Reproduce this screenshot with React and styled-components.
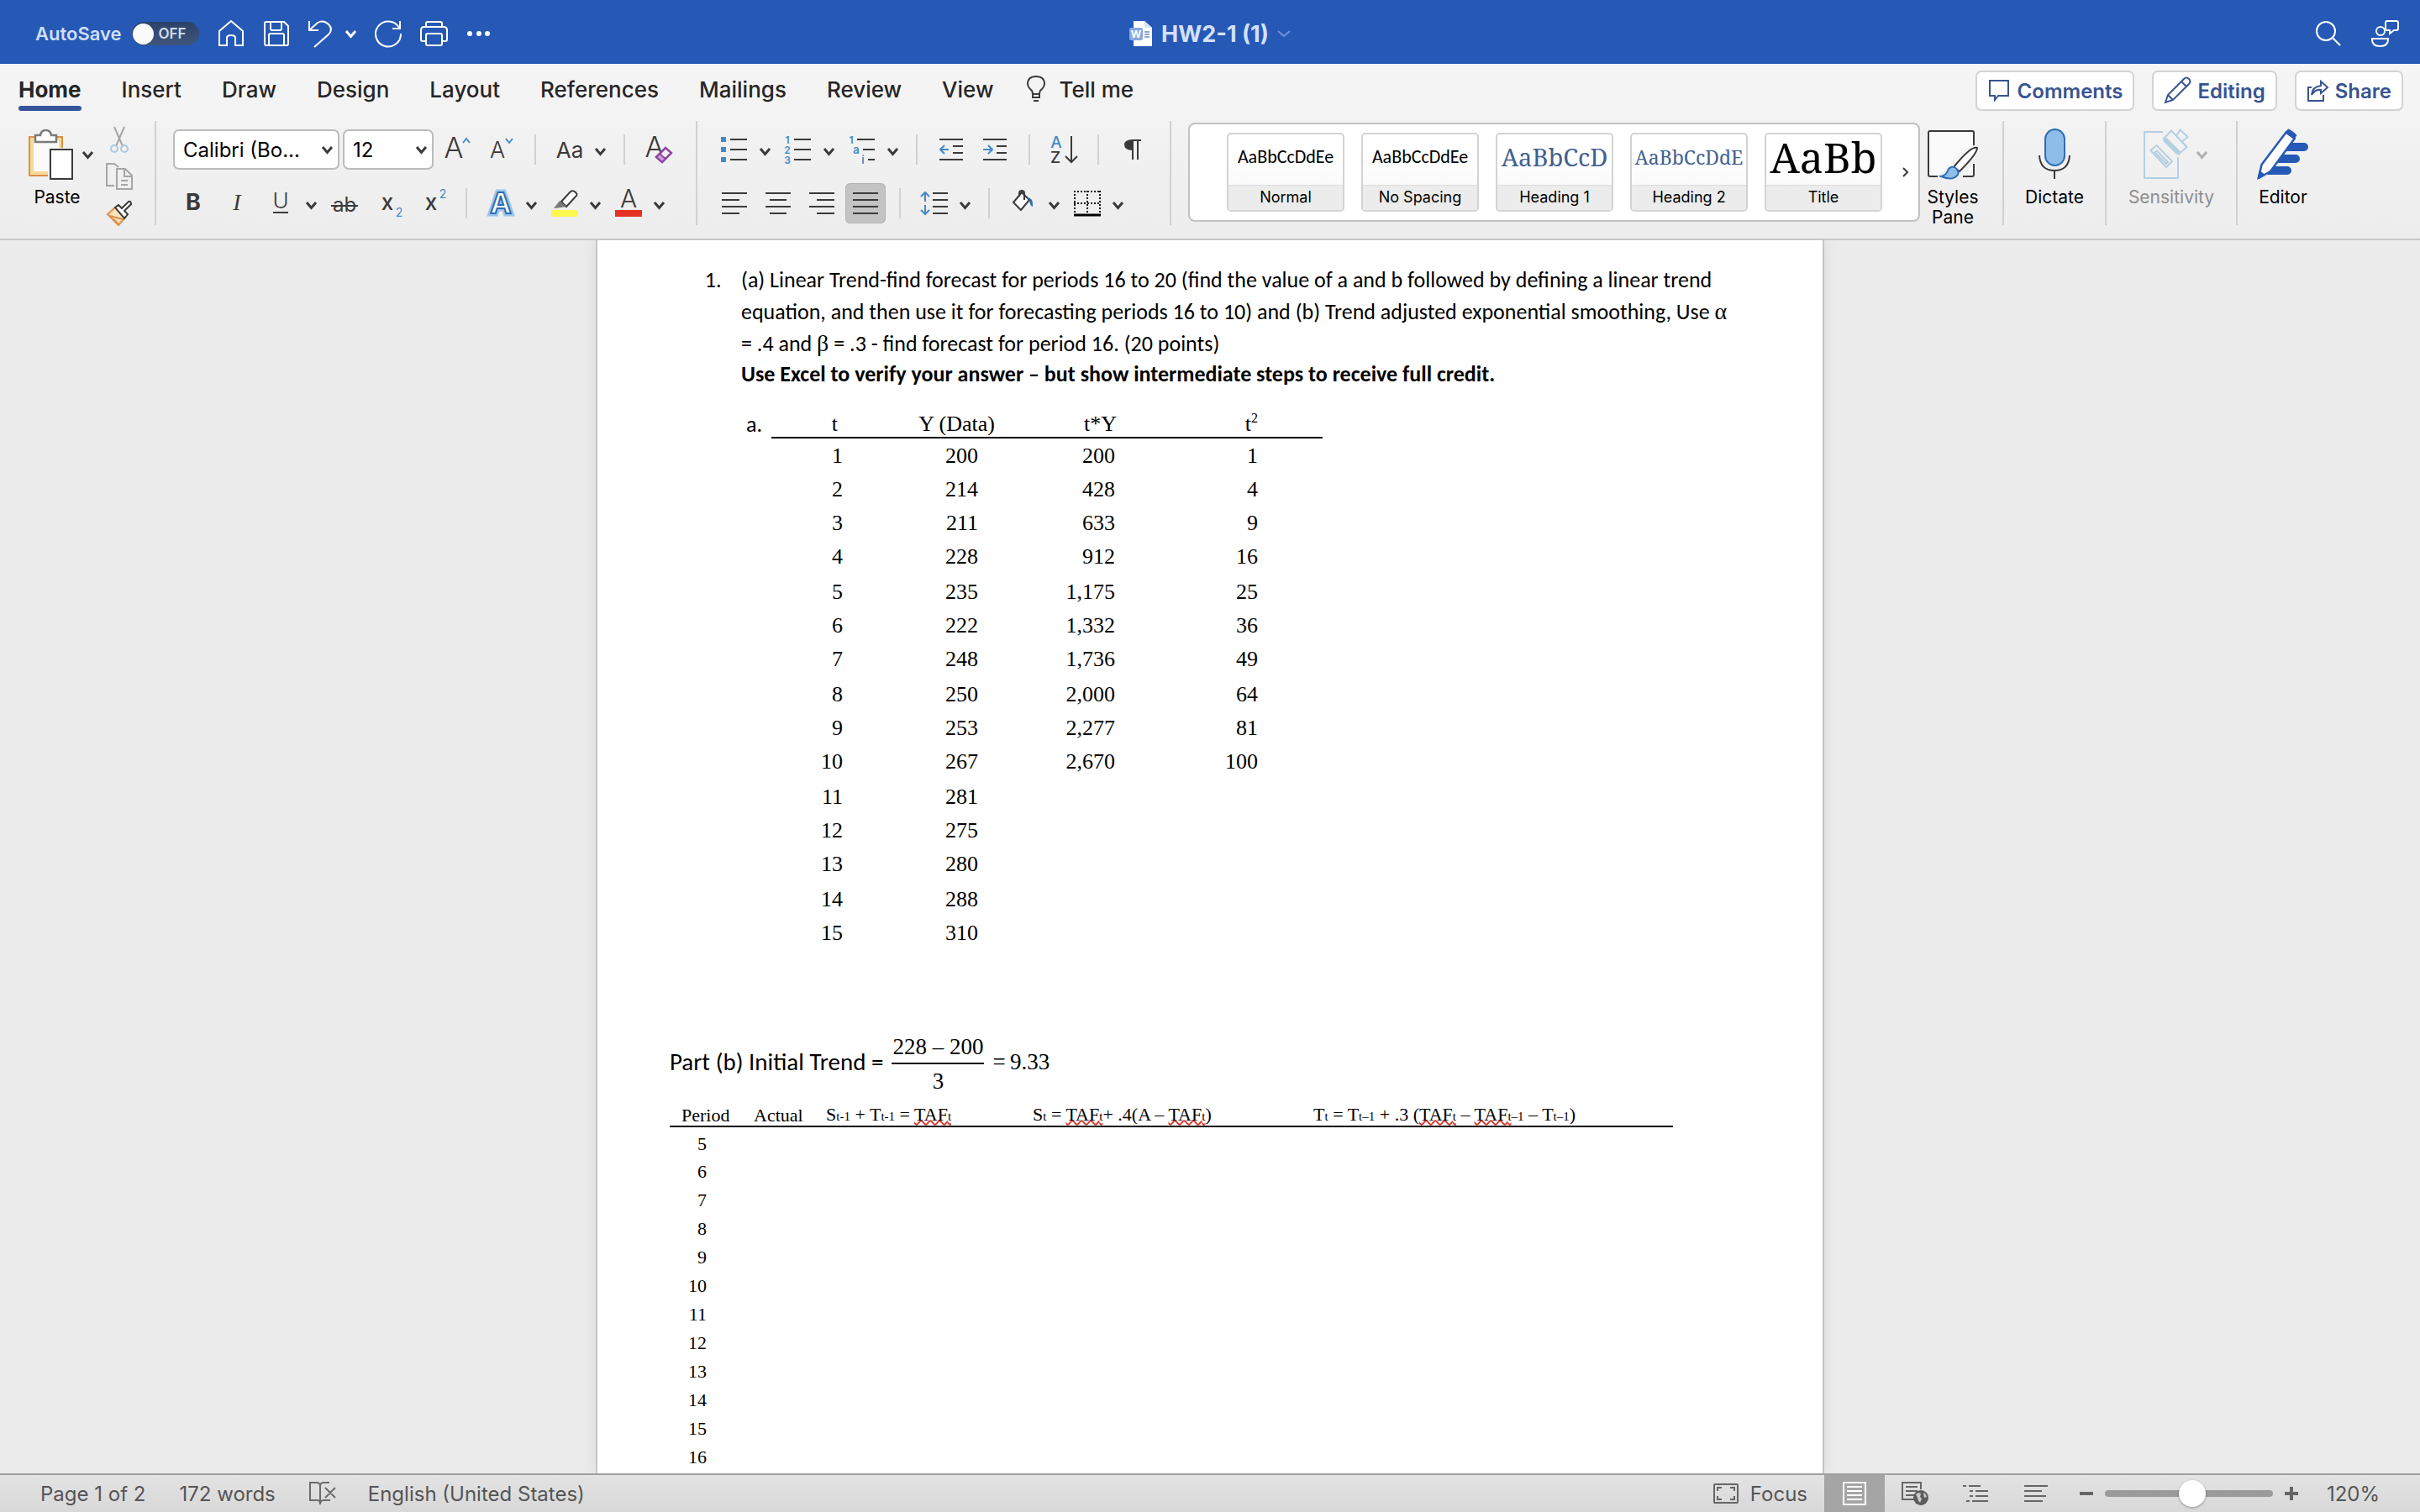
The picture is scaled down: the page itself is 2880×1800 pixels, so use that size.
import React,{ useState } from 'react';
import styled, { createGlobalStyle, css } from 'styled-components';

const ink = '#3b3a39';
const blue = '#4489c8';
const brand = '#2659b6';
const uiFont = 'Inter, "Liberation Sans", sans-serif';
const bodyFont = 'Carlito, Calibri, Lato, sans-serif';
const serifFont = '"Times New Roman", "Liberation Serif", serif';

const GlobalStyle = createGlobalStyle`
    * {
        box-sizing:border-box;
    }
    body {
        margin:0;
        font-family:${uiFont};
        color:#262626;
    }
    button, select, input {
        font:inherit;
        color:inherit;
        margin:0;
    }
    button {
        border:0;
        padding:0;
        background:none;
        cursor:pointer;
    }
    svg {
        display:block;
        overflow:visible;
        flex:none;
    }
`
const Window = styled.div`
    display:flex;
    flex-direction:column;
    height:100vh;
    overflow:hidden;
`

/* title bar */
const TitleBar = styled.header`
    display:grid;
    grid-template-columns:1fr auto 1fr;
    align-items:center;
    height:76px;
    padding:4px 24px 0;
    background:${brand};
    color:#fff;
`
const QuickBar = styled.div`
    display:flex;
    align-items:center;
    gap:22px;
    padding-left:18px;
`
const QuickButton = styled.button`
    display:flex;
    align-items:center;
`
const UndoGroup = styled.div`
    display:flex;
    align-items:center;
    gap:16px;
`
const AutoSave = styled.label`
    display:flex;
    align-items:center;
    gap:12px;
    font-size:22px;
    font-weight:600;
    color:#cfdffb;
    input {
        position:absolute;
        opacity:0;
    }
`
const Track = styled.span`
    display:flex;
    align-items:center;
    gap:6px;
    width:80px;
    height:28px;
    padding-left:1px;
    border-radius:14px;
    background:linear-gradient(#2c4269, #3f557c);
    font-size:17px;
    font-weight:600;
    color:#d3dcec;
    &::before {
        content:'';
        width:25px;
        height:25px;
        border-radius:50%;
        background:#fafafa;
    }
`
const DocTitle = styled.h1`
    display:flex;
    align-items:center;
    gap:10px;
    margin:0;
    font-size:27px;
    font-weight:700;
    color:#d3e1fb;
`
const TitleRight = styled.div`
    display:flex;
    justify-content:flex-end;
    gap:36px;
`

/* ribbon */
const Ribbon = styled.section`
    background:linear-gradient(#f6f5f6, #ededed);
    border-bottom:2px solid #c8c8c8;
`
const TabRow = styled.nav`
    display:flex;
    align-items:flex-start;
    gap:48px;
    height:68px;
    padding:8px 20px 0 22px;
`
const Tab = styled.button`
    display:flex;
    align-items:center;
    gap:16px;
    height:48px;
    padding-bottom:4px;
    font-size:26px;
    font-weight:500;
    ${p => p.$active && css`
        position:relative;
        font-weight:700;
        &::after {
            content:'';
            position:absolute;
            left:0;
            right:0;
            bottom:0;
            height:6px;
            border-radius:3px;
            background:#35549a;
        }
    `}
`
const TabList = styled.div`
    display:flex;
    gap:48px;
    margin-right:-8px;
`
const TabActions = styled.div`
    display:flex;
    gap:21px;
    margin-left:auto;
`
const ActionButton = styled.button`
    display:flex;
    align-items:center;
    gap:8px;
    height:48px;
    padding:0 12px;
    border:2px solid #d4d3d4;
    border-radius:7px;
    background:#fff;
    font-size:24px;
    font-weight:600;
    color:#375491;
`
const RibbonBody = styled.div`
    display:flex;
    align-items:flex-start;
    height:140px;
    padding-right:129px;
`
const GroupLine = styled.hr`
    width:2px;
    height:124px;
    margin:0 20px 0 ${p => p.$wide ? '20px' : '18px'};
    border:0;
    background:#d1d1d1;
    flex:none;
`
const Group = styled.div`
    display:flex;
    flex-direction:column;
    gap:16px;
    padding-top:10px;
`
const ToolRow = styled.div`
    display:flex;
    align-items:center;
    gap:4px;
    height:48px;
`
const ToolLine = styled.hr`
    width:2px;
    height:36px;
    margin:0 12px;
    border:0;
    background:#d1d1d1;
`
const ToolButton = styled.button`
    display:flex;
    align-items:center;
    justify-content:center;
    width:48px;
    height:48px;
    border-radius:6px;
    background:${p => p.$pressed ? '#c3c3c3' : 'none'};
    box-shadow:${p => p.$pressed ? 'inset 0 0 0 1px #b3b3b3' : 'none'};
`
const Split = styled.div`
    display:flex;
`
const DropButton = styled.button`
    display:flex;
    align-items:center;
    justify-content:center;
    width:24px;
    padding-top:4px;
`
const Combo = styled.span`
    display:grid;
    align-items:center;
    width:${p => p.$width};
    height:48px;
    > * {
        grid-area:1 / 1;
    }
    svg {
        justify-self:end;
        margin-right:8px;
        pointer-events:none;
    }
    select {
        appearance:none;
        width:100%;
        height:48px;
        padding:0 10px;
        border:2px solid #bcbcbc;
        border-radius:7px;
        background:#fff;
        font-size:24px;
        color:#000;
    }
`
const Clipboard = styled.div`
    display:flex;
    gap:14px;
    width:166px;
    padding-left:28px;
`
const ClipColumn = styled.div`
    display:flex;
    flex-direction:column;
`
const ClipButton = styled.button`
    display:flex;
    align-items:center;
    justify-content:center;
    width:40px;
    height:44px;
`
const BigButton = styled.button`
    display:flex;
    flex-direction:column;
    align-items:center;
    gap:7px;
    width:${p => p.$width};
    padding-top:8px;
    font-size:21px;
    line-height:24px;
    white-space:nowrap;
    color:${p => p.$muted ? '#8d8d8d' : '#000'};
    flex:none;
`
const BigIcon = styled.span`
    display:flex;
    align-items:center;
    gap:10px;
    height:64px;
    margin-left:${p => p.$split ? '8px' : '0'};
`
const Gallery = styled.div`
    display:flex;
    align-items:center;
    flex:1;
    height:118px;
    margin-top:2px;
    padding-left:44px;
    border:2px solid #c2c2c2;
    border-radius:8px;
    background:#fff;
`
const Cards = styled.div`
    display:flex;
    gap:20px;
`
const Card = styled.button`
    display:flex;
    flex-direction:column;
    width:140px;
    height:94px;
    border:2px solid #d3d3d3;
    border-radius:5px;
    background:linear-gradient(#fff 30%, #f6f6f6);
`
const Sample = styled.span`
    display:flex;
    align-items:center;
    justify-content:center;
    width:100%;
    height:60px;
    padding-bottom:6px;
    font-family:${p => p.$serif ? '"Noto Serif", "DejaVu Serif", "Liberation Serif", serif' : bodyFont};
    font-size:${p => p.$size};
    line-height:54px;
    color:${p => p.$color || '#000'};
    white-space:nowrap;
`
const CardLabel = styled.span`
    flex:1;
    width:100%;
    border-top:1px solid #dcdcdc;
    border-radius:0 0 3px 3px;
    background:#ececec;
    font-size:18px;
    line-height:28px;
    color:#000;
`
const GalleryMore = styled.button`
    display:flex;
    flex:1;
    justify-content:center;
    padding:0 0 0 12px;
`

/* document */
const Desk = styled.main`
    display:flex;
    justify-content:center;
    flex:1;
    min-height:0;
    overflow:hidden;
    background:#ebebeb;
`
const Page = styled.article`
    width:1462px;
    padding:28px 86px 0;
    border:solid #c6c6c6;
    border-width:0 2px;
    background:#fff;
    box-shadow:0 0 16px #00000014;
    font-family:${bodyFont};
    font-size:26px;
    color:#000;
`
const Question = styled.ol`
    margin:0;
    padding:0 0 0 85px;
    line-height:38px;
    white-space:nowrap;
    li {
        padding-left:0;
        &::marker {
            content:'1.    ';
        }
    }
    strong {
        display:block;
        line-height:34px;
    }
`
const Greek = styled.span`
    font-family:${serifFont};
    font-size:28px;
    line-height:30px;
`
const PartA = styled.section`
    display:flex;
    align-items:flex-start;
    gap:11px;
    margin-top:28px;
    padding-left:91px;
    line-height:30px;
`
const DataTable = styled.table`
    width:656px;
    table-layout:fixed;
    border-collapse:collapse;
    font-family:${serifFont};
    font-size:26px;
    th {
        padding:0;
        font-weight:400;
        line-height:30px;
        text-align:right;
        border-bottom:2px solid #000;
    }
    th:nth-child(1) {
        padding-right:6px;
    }
    td {
        height:40px;
        padding:0;
        line-height:36px;
        text-align:right;
        vertical-align:bottom;
    }
    td:nth-child(2) {
        padding-right:20px;
    }
    td:nth-child(3) {
        padding-right:2px;
    }
    tr:nth-child(3n+5) td {
        height:42px;
    }
    sup {
        font-size:16px;
        line-height:0;
    }
`
const Formula = styled.div`
    display:flex;
    align-items:center;
    gap:10px;
    margin-top:92px;
    font-size:29px;
`
const Maths = styled.span`
    font-family:${serifFont};
    font-size:27px;
`
const Fraction = styled.span`
    display:flex;
    flex-direction:column;
    align-items:center;
    padding-top:6px;
    font-family:${serifFont};
    font-size:27px;
    line-height:40px;
    span:first-child {
        padding:0 1px;
        border-bottom:2px solid #000;
        line-height:38px;
    }
`
const PeriodTable = styled.table`
    width:1194px;
    margin-top:9px;
    table-layout:fixed;
    border-collapse:collapse;
    font-family:${serifFont};
    font-size:22px;
    line-height:22px;
    white-space:nowrap;
    th {
        padding:0;
        font-weight:400;
        text-align:left;
        border-bottom:2px solid #000;
    }
    th:first-child {
        padding-left:14px;
    }
    td {
        height:34px;
        padding:6px 56px 0 0;
        text-align:right;
    }
    small {
        font-size:15px;
    }
`
const Misspelt = styled.span`
    text-decoration:underline wavy #d9342b 2px;
    text-underline-offset:-1px;
    text-decoration-skip-ink:none;
`

/* status bar */
const StatusBar = styled.footer`
    display:flex;
    align-items:stretch;
    justify-content:space-between;
    height:46px;
    padding:0 48px;
    border-top:2px solid #a0a0a0;
    background:linear-gradient(#e3e3e3, #d8d8d8);
    font-size:24px;
    color:#555;
`
const StatusSide = styled.div`
    display:flex;
    align-items:center;
    gap:${p => p.$gap};
`
const StatusButton = styled.button`
    display:flex;
    align-items:center;
    gap:14px;
`
const FocusButton = styled(StatusButton)`
    margin-right:20px;
`
const ViewButton = styled.button`
    display:flex;
    align-items:center;
    justify-content:center;
    align-self:stretch;
    width:72px;
    background:${p => p.$active ? '#a5a5a5' : 'none'};
`
const ZoomGroup = styled.div`
    display:flex;
    align-items:center;
    gap:14px;
    margin-left:16px;
`
const ZoomSlider = styled.input`
    appearance:none;
    width:200px;
    height:32px;
    background:none;
    &::-webkit-slider-runnable-track {
        height:8px;
        border-radius:4px;
        background:#9b9b9b;
    }
    &::-webkit-slider-thumb {
        appearance:none;
        width:32px;
        height:32px;
        margin-top:-12px;
        border-radius:50%;
        background:#fff;
        box-shadow:0 1px 3px #00000059;
    }
`
const ZoomValue = styled.span`
    width:97px;
    text-align:right;
`

const Icon = ({ w = 32, h = 32, children, ...rest }) => (
    <svg width={w} height={h} viewBox={`0 0 ${w} ${h}`} fill="none" stroke={ink} strokeWidth="2" aria-hidden="true" {...rest}>
        {children}
    </svg>
)
const Glyph = ({ x, y, size, color = ink, weight = 400, family = 'Inter', ...rest }) => (
    <text x={x} y={y} fontSize={size} fontWeight={weight} fontFamily={family} fill={color} stroke="none" textAnchor="middle" {...rest} />
)
const Chevron = ({ color = ink }) => (
    <Icon w={13} h={9} stroke={color} strokeWidth="3">
        <path d="M1 1 6.500 7.500 12 1" />
    </Icon>
)
const Lines = ({ rows }) => (
    <Icon w={30} h={26}>
        {rows.map(([x1, x2], i) => <path key={i} d={`M${x1} ${1 + i * 8}H${x2}`} />)}
    </Icon>
)

const PasteIcon = () => (
    <Icon w={55} h={62}>
        <path d="M2 10H41V56H2Z" fill="#f8d99a" stroke="#dd8f45" />
        <path d="M7 14H37V51H7Z" fill="#fafafa" stroke="none" />
        <path d="M9 16V8H15Q16 2 21.500 2T28 8H34V16Z" fill="#fff" stroke="#7a7a7a" strokeWidth="2.500" />
        <path d="M24 23H55V62H24Z" fill="#f3f3f3" stroke="none" />
        <path d="M27 25H53V60H27Z" fill="#fff" />
    </Icon>
)
const CutIcon = () => (
    <Icon w={22} h={32} stroke="#a6a6a6">
        <path d="M5 1 15 24M17 1 7 24" />
        <circle cx="5" cy="27" r="4" stroke="#a9c8e2" />
        <circle cx="17" cy="27" r="4" stroke="#a9c8e2" />
    </Icon>
)
const CopyIcon = () => (
    <Icon w={32} h={32} stroke="#a6a6a6">
        <path d="M10 27H1V1H10L15 5M13 7V31H31V15L23 7ZM22 7V16H31M18 21H26M18 26H26" />
    </Icon>
)
const PainterIcon = () => (
    <Icon w={32} h={32}>
        <path d="M11 9 2 17 15 30 23 21Z" fill="#fbe3bb" stroke="#dd8f45" />
        <path d="M5 19 20 23M9 23 15 29" stroke="#dd8f45" />
        <path d="M11 9 15 6 19 10 27 2Q30 1 30 5L22 13 26 17 22 22Z" fill="#fff" />
    </Icon>
)
const FontGrow = () => (
    <Icon>
        <Glyph x="12" y="26" size="34" weight="300">A</Glyph>
        <path d="M23 8 27 3 31 8" stroke={blue} />
    </Icon>
)
const FontShrink = () => (
    <Icon>
        <Glyph x="12" y="26" size="27" weight="300">A</Glyph>
        <path d="M22 3 26 8 30 3" stroke={blue} />
    </Icon>
)
const ClearFormat = () => (
    <Icon>
        <Glyph x="11" y="25" size="34" weight="300">A</Glyph>
        <path d="M13 25 24 14 31 20 20 31Z" fill="#f4eef7" stroke="#8d44a0" strokeWidth="2.500" />
        <path d="M13 25 17 21 24 27 20 31Z" fill="#cb9fd6" stroke="#8d44a0" />
    </Icon>
)
const TextEffects = () => (
    <Icon>
        <Glyph x="16" y="28" size="34" weight="700" color="#fff" style={{ stroke: '#9cc5ec', strokeWidth: 7 }}>A</Glyph>
        <Glyph x="16" y="28" size="34" weight="700" color="#fff" style={{ stroke: '#2f6db5', strokeWidth: 2 }}>A</Glyph>
    </Icon>
)
const Highlighter = () => (
    <Icon>
        <path d="M0 24H32V32H0Z" fill="#fdf84f" stroke="none" />
        <path d="M12 14 23 2Q26 0 29 3T29 8L18 20Z" fill="#fff" />
        <path d="M10 13 18 20 12 21 3 22Z" fill="#7a7a7a" stroke="none" />
    </Icon>
)
const FontColor = () => (
    <Icon>
        <Glyph x="16" y="21" size="30" weight="300">A</Glyph>
        <path d="M0 24H32V32H0Z" fill="#e73324" stroke="none" />
    </Icon>
)
const Bullets = () => (
    <Icon w={32} h={32}>
        <path d="M0 1H6V7H0ZM0 13H6V19H0ZM0 25H6V31H0Z" fill={blue} stroke="none" />
        <path d="M11 4H31M11 16H31M11 28H31" />
    </Icon>
)
const Numbering = () => (
    <Icon w={32} h={32}>
        <Glyph x="3" y="9" size="12" weight="600" color={blue}>1</Glyph>
        <Glyph x="3" y="21" size="12" weight="600" color={blue}>2</Glyph>
        <Glyph x="3" y="33" size="12" weight="600" color={blue}>3</Glyph>
        <path d="M11 4H31M11 16H31M11 28H31" />
    </Icon>
)
const Multilevel = () => (
    <Icon w={32} h={32}>
        <Glyph x="3" y="9" size="12" weight="600" color={blue}>1</Glyph>
        <Glyph x="9" y="21" size="13" weight="600" color={blue}>a</Glyph>
        <Glyph x="17" y="33" size="13" weight="600" color={blue}>i</Glyph>
        <path d="M10 4H31M17 16H31M23 28H31" />
    </Icon>
)
const Outdent = () => (
    <Icon w={30} h={26}>
        <path d="M1 1H29M17 9H29M17 17H29M1 25H29" />
        <path d="M12 13H2M7 8 2 13 7 18" stroke={blue} />
    </Icon>
)
const Indent = () => (
    <Icon w={30} h={26}>
        <path d="M1 1H29M17 9H29M17 17H29M1 25H29" />
        <path d="M1 13H12M7 8 12 13 7 18" stroke={blue} />
    </Icon>
)
const SortIcon = () => (
    <Icon w={32} h={34}>
        <Glyph x="7" y="15" size="19" weight="500" color={blue}>A</Glyph>
        <Glyph x="6" y="33" size="19" weight="500">Z</Glyph>
        <path d="M25 1V32M18 25 25 32 32 25" />
    </Icon>
)
const Pilcrow = () => (
    <Icon w={20} h={24}>
        <path d="M9 0H20V2H9Z" fill={ink} stroke="none" />
        <path d="M10 0V13Q0 13 0 6.500T10 0Z" fill={ink} stroke="none" />
        <path d="M10 0V24M16 0V24" />
    </Icon>
)
const LineSpacing = () => (
    <Icon w={34} h={28}>
        <path d="M6 1V12M1 6 6 1 11 6M6 16V27M1 22 6 27 11 22" stroke={blue} />
        <path d="M15 2H33M15 10H33M15 18H33M15 26H33" />
    </Icon>
)
const Bucket = () => (
    <Icon w={26} h={32}>
        <path d="M11 3 1 15 10 24 20 12ZM8 8V4Q8 1 11 1T14 4V12" fill="#fff" />
        <path d="M17 9Q25 9 24 20 21 20 20 12Z" fill="#2f6db5" stroke="none" />
    </Icon>
)
const Borders = () => (
    <Icon w={32} h={30}>
        <path d="M0 1H32M0 15H32M1 0V28M16 0V28M31 0V28" strokeDasharray="2 2" stroke="#111" />
        <path d="M0 29H32" strokeWidth="3" stroke="#000" />
    </Icon>
)
const StylesIcon = () => (
    <Icon w={60} h={62}>
        <path d="M55 20V5Q55 3 53 3H3Q1 3 1 5V55Q1 57 3 57H12M42 57H53Q55 57 55 55V42" fill="#fafafa" />
        <path d="M29 45Q45 20 57 24 58 30 38 52Z" fill="#fff" stroke="#f4f4f4" strokeWidth="6" />
        <path d="M31 46Q52 20 59 23 59 30 38 51Z" fill="#fff" />
        <path d="M16 57Q22 56 24 50 26 45 32 46 38 50 36 55 30 63 16 57Z" fill="#8fbdea" stroke="#2f6db5" />
    </Icon>
)
const MicIcon = () => (
    <Icon w={38} h={62}>
        <rect x="8" y="1" width="23" height="43" rx="11.500" fill="#8fbdea" stroke="#2f6db5" />
        <path d="M1 32Q2 50 19 50T37 32M19 50V60" />
    </Icon>
)
const SensitivityIcon = () => (
    <Icon w={54} h={62} stroke="#b5cfe2">
        <path d="M24 4H2V59H42V34" />
        <path d="M9.500 26 16.500 20 35 39 28 46Z" />
        <path d="M14.500 28.500 17 26.500 30 40 28 42Z" />
        <path d="M25 12 34 2.500 52.500 22 43 30.500Z" />
        <path d="M26 12.500 43 29.500" strokeWidth="6" />
        <path d="M40.500 8 44.500 1.500 53.500 10 47 15.500" />
    </Icon>
)
const EditorIcon = () => (
    <Icon w={62} h={64}>
        <path d="M36 18H56A5 5 0 0 1 56 28H28ZM30 32H46A5 5 0 0 1 46 42H22ZM20 46H36A5 5 0 0 1 36 56H12Z" fill="#2659b6" stroke="none" />
        <path d="M2 60 5.500 44 35 5 45 12.500 16 52Z" fill="#fff" stroke="#2659b6" strokeWidth="2.500" strokeLinejoin="round" />
        <path d="M33 6 37 1.500Q42 3 47.500 9L44 14ZM0 62 2.500 51Q7 53 9.500 57Z" fill="#2659b6" stroke="none" />
    </Icon>
)

const styleCards = [
    { label:'Normal', sample:'AaBbCcDdEe', size:'22px' },
    { label:'No Spacing', sample:'AaBbCcDdEe', size:'22px' },
    { label:'Heading 1', sample:'AaBbCcD', size:'29px', color:'#41608f', serif:true },
    { label:'Heading 2', sample:'AaBbCcDdE', size:'23px', color:'#41608f', serif:true },
    { label:'Title', sample:'AaBb', size:'50px', serif:true },
]
const trendRows = [
    ['1', '200', '200', '1'],
    ['2', '214', '428', '4'],
    ['3', '211', '633', '9'],
    ['4', '228', '912', '16'],
    ['5', '235', '1,175', '25'],
    ['6', '222', '1,332', '36'],
    ['7', '248', '1,736', '49'],
    ['8', '250', '2,000', '64'],
    ['9', '253', '2,277', '81'],
    ['10', '267', '2,670', '100'],
    ['11', '281', '', ''],
    ['12', '275', '', ''],
    ['13', '280', '', ''],
    ['14', '288', '', ''],
    ['15', '310', '', ''],
]
const periods = [5, 6, 7, 8, 9, 10, 11, 12, 13, 14, 15, 16]
const tabs = ['Home', 'Insert', 'Draw', 'Design', 'Layout', 'References', 'Mailings', 'Review', 'View']

const SplitTool = ({ label, children }) => (
    <Split>
        <ToolButton aria-label={label}>{children}</ToolButton>
        <DropButton aria-label={`${label} options`}><Chevron /></DropButton>
    </Split>
)

const Title = () => {
    const [ autoSave, setAutoSave ] = useState(false)
    return (
        <TitleBar>
            <QuickBar>
                <AutoSave>
                    AutoSave
                    <input type="checkbox" checked={autoSave} onChange={() => setAutoSave(!autoSave)} />
                    <Track>{autoSave ? 'ON' : 'OFF'}</Track>
                </AutoSave>
                <QuickButton aria-label="Home">
                    <Icon stroke="#fff"><path d="M2 30V13L16 1 30 13V30H21V21Q21 18 16 18T11 21V30Z" /></Icon>
                </QuickButton>
                <QuickButton aria-label="Save">
                    <Icon stroke="#fff"><path d="M2 4Q2 2 4 2H25L30 7V28Q30 30 28 30H4Q2 30 2 28ZM9 2V10Q9 12 11 12H20Q22 12 22 10V2M7 30V18Q7 16 9 16H23Q25 16 25 18V30" /></Icon>
                </QuickButton>
                <UndoGroup>
                    <QuickButton aria-label="Undo">
                        <Icon w={28} stroke="#fff"><path d="M1 1V12H12M1 12 11 3Q18-1 24 5T24 17L7 32" /></Icon>
                    </QuickButton>
                    <QuickButton aria-label="Undo history"><Chevron color="#fff" /></QuickButton>
                </UndoGroup>
                <QuickButton aria-label="Redo">
                    <Icon stroke="#fff"><path d="M30 1V10H21M29 9A15 15 0 1 0 31 16" /></Icon>
                </QuickButton>
                <QuickButton aria-label="Print">
                    <Icon stroke="#fff"><path d="M7 8V4Q7 2 9 2H24Q26 2 26 4V8M7 25H3Q1 25 1 23V12Q1 8 5 8H28Q32 8 32 12V23Q32 25 30 25H26M7 18Q7 16 9 16H24Q26 16 26 18V28Q26 30 24 30H9Q7 30 7 28Z" /></Icon>
                </QuickButton>
                <QuickButton aria-label="More">
                    <Icon w={30} h={6} stroke="none" fill="#fff"><circle cx="5" cy="3" r="3" /><circle cx="16" cy="3" r="3" /><circle cx="26" cy="3" r="3" /></Icon>
                </QuickButton>
            </QuickBar>
            <DocTitle>
                <Icon w={28} h={30} stroke="none">
                    <path d="M5 0H18L27 8V30H5Z" fill="#fff" />
                    <path d="M18 0V8H27Z" fill="#d8e2f5" />
                    <rect x="0" y="8" width="16" height="15" rx="2" fill="#8ba9e0" />
                    <Glyph x="8" y="20" size="12" weight="700" color="#fff">W</Glyph>
                    <path d="M18 13H24M18 16H24M18 19H24" stroke="#8ba9e0" />
                </Icon>
                HW2-1 (1)
                <Icon w={16} h={8} stroke="#6f93d6"><path d="M1 1 8 7 15 1" /></Icon>
            </DocTitle>
            <TitleRight>
                <QuickButton aria-label="Search">
                    <Icon w={30} stroke="#fff"><circle cx="12" cy="13" r="11" /><path d="M20 21 29 30" /></Icon>
                </QuickButton>
                <QuickButton aria-label="Feedback">
                    <Icon w={34} stroke="#fff"><circle cx="11" cy="13" r="5" /><path d="M1 22H20V23Q20 31 10.500 31T1 23ZM19 1H30Q32 1 32 3V10Q32 12 30 12H27L22 16V12H19Q17 12 17 10V3Q17 1 19 1Z" /></Icon>
                </QuickButton>
            </TitleRight>
        </TitleBar>
    )
}

const Tabs = () => (
    <TabRow>
        <TabList>
            {tabs.map((name, i) => <Tab key={name} $active={i === 0}>{name}</Tab>)}
        </TabList>
        <Tab>
            <Icon w={22} h={32}>
                <path d="M7 22Q7 18 4 16 1 13 1 10 1 1 11 1T21 10Q21 13 18 16 15 18 15 22V26H7ZM7 22H15M8 30H14" />
            </Icon>
            Tell me
        </Tab>
        <TabActions>
            <ActionButton>
                <Icon w={28} h={28} stroke="#375491"><path d="M3 2H25V20H13L9 25V20H3Z" /></Icon>
                Comments
            </ActionButton>
            <ActionButton>
                <Icon w={32} h={34} stroke="#375491"><path d="M2 31 5 22 24 3Q27 0 30 3T30 9L11 28ZM5 22 11 28M21 6 27 12" /></Icon>
                Editing
            </ActionButton>
            <ActionButton>
                <Icon w={26} h={26} stroke="#375491"><path d="M6 9H2V25H20V18M17 7V2L25 9 17 16V12Q10 11 6 18 7 8 17 7Z" /></Icon>
                Share
            </ActionButton>
        </TabActions>
    </TabRow>
)

const FontGroup = () => (
    <Group>
        <ToolRow>
            <Combo $width="198px">
                <select aria-label="Font"><option>Calibri (Bo...</option></select>
                <Chevron />
            </Combo>
            <Combo $width="108px">
                <select aria-label="Font size"><option>12</option></select>
                <Chevron />
            </Combo>
            <ToolButton aria-label="Increase font size"><FontGrow /></ToolButton>
            <ToolButton aria-label="Decrease font size"><FontShrink /></ToolButton>
            <ToolLine />
            <SplitTool label="Change case"><Icon><Glyph x="16" y="26" size="26">Aa</Glyph></Icon></SplitTool>
            <ToolLine />
            <ToolButton aria-label="Clear formatting"><ClearFormat /></ToolButton>
        </ToolRow>
        <ToolRow>
            <ToolButton aria-label="Bold"><Icon><Glyph x="16" y="24" size="27" weight="700">B</Glyph></Icon></ToolButton>
            <ToolButton aria-label="Italic"><Icon><Glyph x="16" y="24" size="28" family="Liberation Serif" fontStyle="italic">I</Glyph></Icon></ToolButton>
            <SplitTool label="Underline"><Icon><Glyph x="16" y="22" size="26" weight="300">U</Glyph><path d="M7 27H25" /></Icon></SplitTool>
            <ToolButton aria-label="Strikethrough"><Icon><Glyph x="16" y="26" size="24">ab</Glyph><path d="M0 19H32" /></Icon></ToolButton>
            <ToolButton aria-label="Subscript"><Icon><Glyph x="15" y="24" size="26" weight="500">x</Glyph><Glyph x="29" y="32" size="14" color={blue}>2</Glyph></Icon></ToolButton>
            <ToolButton aria-label="Superscript"><Icon><Glyph x="15" y="24" size="26" weight="500">x</Glyph><Glyph x="29" y="10" size="14" color={blue}>2</Glyph></Icon></ToolButton>
            <ToolLine />
            <SplitTool label="Text effects"><TextEffects /></SplitTool>
            <SplitTool label="Highlight"><Highlighter /></SplitTool>
            <SplitTool label="Font color"><FontColor /></SplitTool>
        </ToolRow>
    </Group>
)

const ParagraphGroup = () => (
    <Group>
        <ToolRow>
            <SplitTool label="Bullets"><Bullets /></SplitTool>
            <SplitTool label="Numbering"><Numbering /></SplitTool>
            <SplitTool label="Multilevel list"><Multilevel /></SplitTool>
            <ToolLine />
            <ToolButton aria-label="Decrease indent"><Outdent /></ToolButton>
            <ToolButton aria-label="Increase indent"><Indent /></ToolButton>
            <ToolLine />
            <ToolButton aria-label="Sort"><SortIcon /></ToolButton>
            <ToolLine />
            <ToolButton aria-label="Show marks"><Pilcrow /></ToolButton>
        </ToolRow>
        <ToolRow>
            <ToolButton aria-label="Align left"><Lines rows={[[0, 30], [0, 21], [0, 30], [0, 21]]} /></ToolButton>
            <ToolButton aria-label="Center"><Lines rows={[[0, 30], [5, 25], [0, 30], [5, 25]]} /></ToolButton>
            <ToolButton aria-label="Align right"><Lines rows={[[0, 30], [9, 30], [0, 30], [9, 30]]} /></ToolButton>
            <ToolButton aria-label="Justify" $pressed><Lines rows={[[0, 30], [0, 30], [0, 30], [0, 30]]} /></ToolButton>
            <ToolLine />
            <SplitTool label="Line spacing"><LineSpacing /></SplitTool>
            <ToolLine />
            <SplitTool label="Shading"><Bucket /></SplitTool>
            <SplitTool label="Borders"><Borders /></SplitTool>
        </ToolRow>
    </Group>
)

const RibbonTools = () => (
    <RibbonBody>
        <Clipboard>
            <BigButton $width="80px">
                <BigIcon $split><PasteIcon /><Chevron /></BigIcon>
                Paste
            </BigButton>
            <ClipColumn>
                <ClipButton aria-label="Cut"><CutIcon /></ClipButton>
                <ClipButton aria-label="Copy"><CopyIcon /></ClipButton>
                <ClipButton aria-label="Format painter"><PainterIcon /></ClipButton>
            </ClipColumn>
        </Clipboard>
        <GroupLine />
        <FontGroup />
        <GroupLine $wide />
        <ParagraphGroup />
        <GroupLine $wide />
        <Gallery>
            <Cards>
                {styleCards.map((card) => (
                    <Card key={card.label}>
                        <Sample $size={card.size} $color={card.color} $serif={card.serif}>{card.sample}</Sample>
                        <CardLabel>{card.label}</CardLabel>
                    </Card>
                ))}
            </Cards>
            <GalleryMore aria-label="More styles">
                <Icon w={9} h={12}><path d="M2 1 7 6 2 11" /></Icon>
            </GalleryMore>
        </Gallery>
        <BigButton $width="78px"><BigIcon><StylesIcon /></BigIcon><span>Styles<br />Pane</span></BigButton>
        <GroupLine $wide />
        <BigButton $width="80px"><BigIcon><MicIcon /></BigIcon>Dictate</BigButton>
        <GroupLine $wide />
        <BigButton $width="114px" $muted><BigIcon $split><SensitivityIcon /><Chevron color="#b0b0b0" /></BigIcon>Sensitivity</BigButton>
        <GroupLine $wide />
        <BigButton $width="68px"><BigIcon><EditorIcon /></BigIcon>Editor</BigButton>
    </RibbonBody>
)

const Taf = () => <Misspelt>TAF<small>t</small></Misspelt>

const Document = () => (
    <Desk>
        <Page>
            <Question>
                <li>
                    (a) Linear Trend-find forecast for periods 16 to 20 (find the value of a and b followed by defining a linear trend<br />
                    equation, and then use it for forecasting periods 16 to 10) and (b) Trend adjusted exponential smoothing, Use <Greek>α</Greek><br />
                    = .4 and <Greek>β</Greek> = .3 - find forecast for period 16. (20 points)
                    <strong>Use Excel to verify your answer – but show intermediate steps to receive full credit.</strong>
                </li>
            </Question>
            <PartA>
                <span>a.</span>
                <DataTable>
                    <colgroup>
                        <col width="85" /><col width="181" /><col width="145" /><col width="168" /><col />
                    </colgroup>
                    <thead>
                        <tr><th>t</th><th>Y (Data)</th><th>t*Y</th><th>t<sup>2</sup></th><th /></tr>
                    </thead>
                    <tbody>
                        {trendRows.map((row) => (
                            <tr key={row[0]}>{row.map((cell, i) => <td key={i}>{cell}</td>)}<td /></tr>
                        ))}
                    </tbody>
                </DataTable>
            </PartA>
            <Formula>
                Part (b) Initial Trend =
                <Fraction><span>228 – 200</span><span>3</span></Fraction>
                <Maths>={'\u2009'}9.33</Maths>
            </Formula>
            <PeriodTable>
                <colgroup>
                    <col width="100" /><col width="86" /><col width="246" /><col width="334" /><col />
                </colgroup>
                <thead>
                    <tr>
                        <th>Period</th>
                        <th>Actual</th>
                        <th>S<small>t-1</small> + T<small>t-1</small> = <Taf /></th>
                        <th>S<small>t</small> = <Taf />+ .4(A – <Taf />)</th>
                        <th>T<small>t</small> = T<small>t–1</small> + .3 (<Taf /> – <Taf /><small>–1</small> – T<small>t–1</small>)</th>
                    </tr>
                </thead>
                <tbody>
                    {periods.map((period) => (
                        <tr key={period}><td>{period}</td><td /><td /><td /><td /></tr>
                    ))}
                </tbody>
            </PeriodTable>
        </Page>
    </Desk>
)

const Status = () => {
    const [ zoom, setZoom ] = useState(120)
    return (
        <StatusBar>
            <StatusSide $gap="40px">
                <span>Page 1 of 2</span>
                <span>172 words</span>
                <StatusButton aria-label="Proofing">
                    <Icon w={30} h={28} stroke="#6b6b6b">
                        <path d="M13 23V4Q12 1 9 1H1V22H10Q13 22 13 27 13 22 17 22H25M13 4Q14 1 17 1H24M19 7 31 19M31 7 19 19" />
                    </Icon>
                </StatusButton>
                <span>English (United States)</span>
            </StatusSide>
            <StatusSide $gap="0">
                <FocusButton>
                    <Icon w={30} h={24} stroke="#666">
                        <rect x="1" y="1" width="28" height="22" rx="1" />
                        <path d="M5 9V5H10M20 5H25V9M25 15V19H20M10 19H5V15" />
                    </Icon>
                    Focus
                </FocusButton>
                <ViewButton $active aria-label="Print layout">
                    <Icon w={28} h={28} stroke="#fff"><path d="M1 1H27V27H1ZM5 6H23M5 11H23M5 16H23M5 21H23" /></Icon>
                </ViewButton>
                <ViewButton aria-label="Web layout">
                    <Icon w={32} h={28} stroke="#666">
                        <path d="M15 21H1V1H23V9M5 6H19M5 11H19M5 16H15" />
                        <circle cx="23" cy="19" r="9" fill="#5c5c5c" stroke="none" />
                        <path d="M17 15Q20 12 23 14L22 18 24 20 22 25Q19 22 19 19ZM26 13Q29 14 30 18L27 19Z" fill="#ccc" stroke="none" />
                    </Icon>
                </ViewButton>
                <ViewButton aria-label="Outline">
                    <Icon w={30} h={20} stroke="#666">
                        <path d="M0 1H4M7 1H21M8 7H12M15 7H30M8 13H12M15 13H30M4 19H8M11 19H30" />
                    </Icon>
                </ViewButton>
                <ViewButton aria-label="Draft">
                    <Icon w={28} h={20} stroke="#666"><path d="M0 1H28M0 7H21M0 13H26M0 19H22" /></Icon>
                </ViewButton>
                <ZoomGroup>
                    <StatusButton aria-label="Zoom out"><Icon w={16} h={16} stroke="#666" strokeWidth="4"><path d="M0 8H16" /></Icon></StatusButton>
                    <ZoomSlider type="range" aria-label="Zoom" min="10" max="220" value={zoom} onChange={(e) => setZoom(Number(e.target.value))} />
                    <StatusButton aria-label="Zoom in"><Icon w={16} h={16} stroke="#666" strokeWidth="4"><path d="M0 8H16M8 0V16" /></Icon></StatusButton>
                </ZoomGroup>
                <ZoomValue>{zoom}%</ZoomValue>
            </StatusSide>
        </StatusBar>
    )
}

const App = () => (
    <>
        <GlobalStyle />
        <Window>
            <Title />
            <Ribbon>
                <Tabs />
                <RibbonTools />
            </Ribbon>
            <Document />
            <Status />
        </Window>
    </>
)
export default App;
